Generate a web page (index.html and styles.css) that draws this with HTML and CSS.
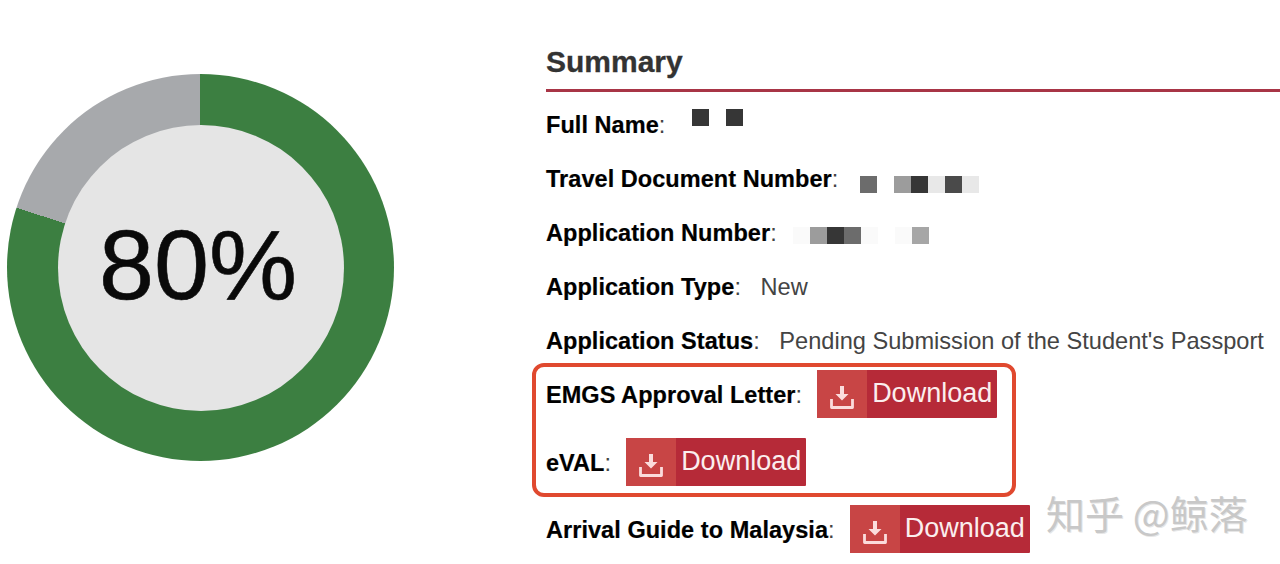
FILE: index.html
```html
<!doctype html>
<html lang="en">
	<head>
		<meta charset="UTF-8" />
		<title>Summary</title>
		<link rel="stylesheet" href="styles.css">
	</head>
	<body>
		<section id="wrap">
			<div class="chart">
				<div class="donut">
					<div class="hole">80%</div>
				</div>
			</div>
			<div class="summary">
				<h2>Summary</h2>
				<div class="row">
					<span class="label"><b>Full Name</b>:</span>
					<span class="mosaic m1"><i class="s0"></i><i class="s1"></i><i class="s0"></i><i class="s1"></i><i class="s0"></i></span>
				</div>
				<div class="row">
					<span class="label"><b>Travel Document Number</b>:</span>
					<span class="mosaic m2"><i class="s3"></i><i class="s0"></i><i class="s4"></i><i class="s1"></i><i class="s2"></i><i class="s6"></i><i class="s2"></i></span>
				</div>
				<div class="row">
					<span class="label"><b>Application Number</b>:</span>
					<span class="mosaic m3"><i class="s7"></i><i class="s4"></i><i class="s1"></i><i class="s3"></i><i class="s7"></i><i class="s0"></i><i class="s7"></i><i class="s5"></i></span>
				</div>
				<div class="row">
					<span class="label"><b>Application Type</b>:</span>
					<span class="value">New</span>
				</div>
				<div class="row">
					<span class="label"><b>Application Status</b>:</span>
					<span class="value">Pending Submission of the Student's Passport</span>
				</div>
				<div class="marked">
					<div class="row">
						<span class="label"><b>EMGS Approval Letter</b>:</span>
						<a href="javascript:;" class="btn">
							<span class="btn-icon"><svg width="24" height="24" viewBox="0 0 24 24"><path d="M10 1h4v8h4.500L12 15.500 5.500 9H10z" fill="#fbdcdc"/><path d="M1.500 14v8.500h21V14" fill="none" stroke="#fbdcdc" stroke-width="2.800" stroke-linejoin="round"/></svg></span>
							<span class="btn-text">Download</span>
						</a>
					</div>
					<div class="row">
						<span class="label"><b>eVAL</b>:</span>
						<a href="javascript:;" class="btn">
							<span class="btn-icon"><svg width="24" height="24" viewBox="0 0 24 24"><path d="M10 1h4v8h4.500L12 15.500 5.500 9H10z" fill="#fbdcdc"/><path d="M1.500 14v8.500h21V14" fill="none" stroke="#fbdcdc" stroke-width="2.800" stroke-linejoin="round"/></svg></span>
							<span class="btn-text">Download</span>
						</a>
					</div>
					<div class="marker"></div>
				</div>
				<div class="row">
					<span class="label"><b>Arrival Guide to Malaysia</b>:</span>
					<a href="javascript:;" class="btn">
						<span class="btn-icon"><svg width="24" height="24" viewBox="0 0 24 24"><path d="M10 1h4v8h4.500L12 15.500 5.500 9H10z" fill="#fbdcdc"/><path d="M1.500 14v8.500h21V14" fill="none" stroke="#fbdcdc" stroke-width="2.800" stroke-linejoin="round"/></svg></span>
						<span class="btn-text">Download</span>
					</a>
				</div>
			</div>
			<div class="mark">知乎 @鲸落</div>
		</section>
	</body>
</html>
```
FILE: styles.css
```css
*{
	margin: 0;
	padding: 0;
	box-sizing: border-box;
}
html,body{
	height: 564px;
	overflow: hidden;
	background: #fff;
}
#wrap{
	position: relative;
	display: flex;
	height: 564px;
	font-family: "Liberation Sans", Arial, sans-serif;
	color: #000;
}
.chart{
	width: 546px;
	padding: 74px 0 0 7px;
	flex-shrink: 0;
}
.donut{
	display: flex;
	align-items: center;
	justify-content: center;
	width: 387px;
	height: 387px;
	border-radius: 50%;
	background: conic-gradient(#3c7f41 0 80%, #a7a9ac 80% 100%);
}
.hole{
	display: flex;
	align-items: center;
	justify-content: center;
	width: 286px;
	height: 286px;
	padding: 0 5px 5px 0;
	border-radius: 50%;
	background: #e5e5e5;
	font-size: 99px;
	color: #0a0a0a;
	-webkit-text-stroke: 0.6px #0a0a0a;
}
.summary{
	flex: 1;
	min-width: 0;
	padding-top: 42px;
}
h2{
	height: 50px;
	margin-bottom: 5px;
	border-bottom: 3px solid #a83546;
	font-size: 30px;
	line-height: 39px;
	color: #333;
	-webkit-text-stroke: 0.3px #333;
}
.row{
	display: flex;
	align-items: center;
	height: 54px;
	font-size: 23.5px;
	color: #444;
	white-space: nowrap;
}
.label{
	padding-top: 2px;
	letter-spacing: 0.05px;
}
.label b{
	color: #000;
	-webkit-text-stroke: 0.2px #000;
}
.value{
	margin-left: 19.5px;
	padding-top: 2px;
	font-size: 23.6px;
	color: #444;
}
.mosaic{
	display: flex;
}
.mosaic i{
	display: block;
	width: 17px;
	height: 17px;
}
.m1{
	margin: -14px 0 0 10px;
}
.m2{
	margin: 13px 0 0 22px;
}
.m3{
	margin: 7px 0 0 16px;
}
.s0{ background: #fff; }
.s1{ background: #363636; }
.s2{ background: #e8e8e8; }
.s3{ background: #6c6c6c; }
.s4{ background: #9c9c9c; }
.s5{ background: #a6a6a6; }
.s6{ background: #4a4a4a; }
.s7{ background: #fafafa; }
.btn{
	display: flex;
	flex-shrink: 0;
	width: 180px;
	height: 48px;
	margin-left: 15px;
	background: #b62a38;
	color: #fbeeee;
	text-decoration: none;
	border-radius: 1px;
}
.btn-icon{
	display: flex;
	align-items: center;
	justify-content: center;
	width: 50px;
	padding-top: 5px;
	background: #c84545;
}
.btn-text{
	padding-left: 5px;
	font-size: 27px;
	line-height: 46px;
}
.marked{
	position: relative;
}
.marked .row + .row{
	margin: 14px 0 13px;
}
.marker{
	position: absolute;
	left: -14px;
	top: -4px;
	width: 484px;
	height: 134px;
	border: 4px solid #e0492f;
	border-radius: 12px;
}
.mark{
	position: absolute;
	left: 1046px;
	top: 490px;
	font-family: "Noto Sans CJK SC", sans-serif;
	font-size: 39px;
	line-height: 44px;
	color: #c8c8c8;
	text-shadow: 1px 1px 0 #e6e6e6;
	white-space: pre;
}
```
